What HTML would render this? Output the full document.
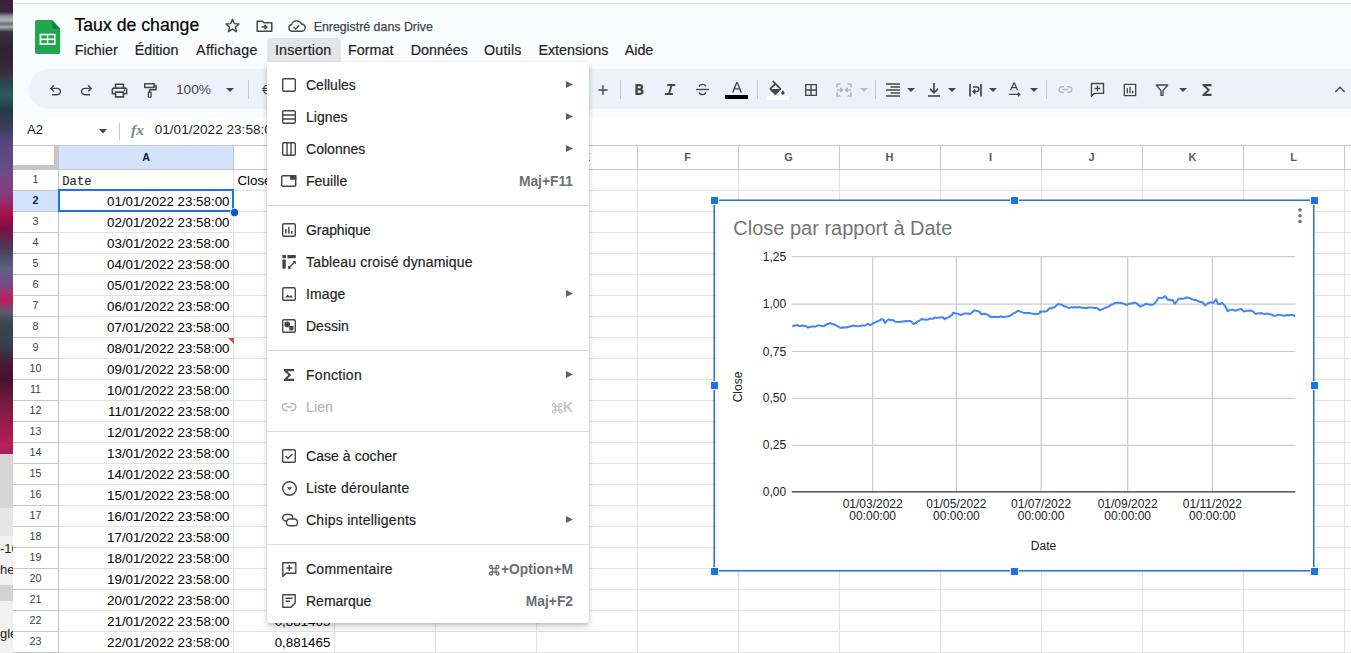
<!DOCTYPE html><html><head><meta charset="utf-8"><style>
html,body{margin:0;padding:0;}
body{width:1351px;height:653px;overflow:hidden;position:relative;background:#fff;font-family:"Liberation Sans",sans-serif;}
.t{position:absolute;white-space:nowrap;}
.r{position:absolute;}
svg{position:absolute;overflow:visible;}
</style></head><body>
<div class="r" style="left:0;top:0;width:13px;height:454px;background:linear-gradient(to bottom,#3a2038 0px,#3c2440 12px,#8a9298 16px,#b0b8b8 20px,#6a6e78 24px,#a8b0b0 27px,#3a3040 32px,#2c2234 50px,#3a2236 62px,#3c2a3c 72px,#2a4a50 84px,#2c5a5a 96px,#223c44 110px,#3a3a50 124px,#54487a 142px,#6a4c8a 172px,#8a3a7c 195px,#a8124a 213px,#7a1040 228px,#4a3a5a 248px,#5a6282 268px,#7a4a86 285px,#c01a5a 300px,#5a5a70 312px,#3a4650 322px,#34404c 345px,#4a1a34 362px,#4a1030 380px,#7a1a40 405px,#9a1a48 425px,#b8205a 445px,#a02060 454px);"></div>
<div class="r" style="left:0px;top:454px;width:13px;height:54px;background:#d6d6d6;"></div>
<div class="r" style="left:0px;top:508px;width:13px;height:28px;background:#e6e6e6;"></div>
<div class="r" style="left:0px;top:536px;width:13px;height:50px;background:#f2f2f2;"></div>
<div class="r" style="left:0px;top:585px;width:13px;height:16px;background:#d2d2d2;"></div>
<div class="r" style="left:0px;top:601px;width:13px;height:52px;background:#f0f0f0;"></div>
<div class="t" style="top:538.50px;font-size:13px;line-height:20px;color:#222;font-weight:normal;font-family:'Liberation Sans', sans-serif;left:0px;">-16</div>
<div class="t" style="top:559.50px;font-size:13px;line-height:20px;color:#222;font-weight:normal;font-family:'Liberation Sans', sans-serif;left:0px;">he</div>
<div class="t" style="top:623.50px;font-size:13px;line-height:20px;color:#222;font-weight:normal;font-family:'Liberation Sans', sans-serif;left:0px;">gle</div>
<div class="r" style="left:13px;top:0px;width:1338px;height:3px;background:#ffffff;"></div>
<div class="r" style="left:13px;top:3px;width:1338px;height:1px;background:#dcdcdc;"></div>
<div class="r" style="left:13px;top:4px;width:1338px;height:113px;background:#f9fbfd;"></div>
<div class="r" style="left:13px;top:0px;width:1px;height:653px;background:#ffffff;"></div>
<svg style="left:34.5px;top:19.8px;" width="25.2" height="34" viewBox="0 0 25.2 34"><path d="M2 0H17L25.2 8.7V32a2 2 0 0 1-2 2H2a2 2 0 0 1-2-2V2a2 2 0 0 1 2-2z" fill="#1ea84e"/><path d="M17 0L25.2 8.7H19a2 2 0 0 1-2-2z" fill="#188038"/><rect x="4.6" y="13.7" width="16" height="11.3" fill="#fff"/><rect x="6.3" y="15.3" width="5.6" height="3.2" fill="#1ea84e"/><rect x="13.3" y="15.3" width="5.6" height="3.2" fill="#1ea84e"/><rect x="6.3" y="20.1" width="5.6" height="3.2" fill="#1ea84e"/><rect x="13.3" y="20.1" width="5.6" height="3.2" fill="#1ea84e"/></svg>
<div class="t" style="top:14.57px;font-size:17.7px;line-height:20px;color:#000000;font-weight:normal;font-family:'Liberation Sans', sans-serif;left:74.4px;-webkit-text-stroke:0.2px #000;">Taux de change</div>
<svg style="left:224.5px;top:18.3px;" width="15" height="14.5" viewBox="0 0 15 14.5"><path d="M7.5 1.2L9.3 5.6L14 6L10.4 9.1L11.5 13.7L7.5 11.2L3.5 13.7L4.6 9.1L1 6L5.7 5.6Z" fill="none" stroke="#444746" stroke-width="1.4" stroke-linejoin="round"/></svg>
<svg style="left:255.5px;top:19.8px;" width="17" height="12.5" viewBox="0 0 17 12.5"><path d="M1.2 1.2H6.5L8 2.8H15.8V11.3H1.2Z" fill="none" stroke="#444746" stroke-width="1.5" stroke-linejoin="round"/><path d="M5.5 7H10.5M8.5 4.8L10.8 7L8.5 9.2" fill="none" stroke="#444746" stroke-width="1.5"/></svg>
<svg style="left:286.5px;top:20.3px;" width="19" height="12" viewBox="0 0 19 12"><path d="M5 11.2H14.5A3.6 3.6 0 0 0 14.6 4A5.4 5.4 0 0 0 4.6 4.5A3.4 3.4 0 0 0 5 11.2Z" fill="none" stroke="#444746" stroke-width="1.4"/><path d="M6.8 7.2L8.6 9L12.2 5.4" fill="none" stroke="#444746" stroke-width="1.4"/></svg>
<div class="t" style="top:16.50px;font-size:12.4px;line-height:20px;color:#444746;font-weight:normal;font-family:'Liberation Sans', sans-serif;left:313.7px;-webkit-text-stroke:0.25px #444746;">Enregistré dans Drive</div>
<div class="r" style="left:267px;top:38px;width:74px;height:24px;background:#e3e5e8;border-radius:4px 4px 0 0;"></div>
<div class="t" style="top:39.75px;font-size:14.3px;line-height:20px;color:#1f1f1f;font-weight:normal;font-family:'Liberation Sans', sans-serif;letter-spacing:0.02px;left:74.7px;-webkit-text-stroke:0.2px #1f1f1f;">Fichier</div>
<div class="t" style="top:39.75px;font-size:14.3px;line-height:20px;color:#1f1f1f;font-weight:normal;font-family:'Liberation Sans', sans-serif;letter-spacing:0px;left:134.7px;-webkit-text-stroke:0.2px #1f1f1f;">Édition</div>
<div class="t" style="top:39.75px;font-size:14.3px;line-height:20px;color:#1f1f1f;font-weight:normal;font-family:'Liberation Sans', sans-serif;letter-spacing:0.25px;left:196.1px;-webkit-text-stroke:0.2px #1f1f1f;">Affichage</div>
<div class="t" style="top:39.75px;font-size:14.3px;line-height:20px;color:#1f1f1f;font-weight:normal;font-family:'Liberation Sans', sans-serif;letter-spacing:0.2px;left:274.9px;-webkit-text-stroke:0.2px #1f1f1f;">Insertion</div>
<div class="t" style="top:39.75px;font-size:14.3px;line-height:20px;color:#1f1f1f;font-weight:normal;font-family:'Liberation Sans', sans-serif;letter-spacing:0px;left:348.09999999999997px;-webkit-text-stroke:0.2px #1f1f1f;">Format</div>
<div class="t" style="top:39.75px;font-size:14.3px;line-height:20px;color:#1f1f1f;font-weight:normal;font-family:'Liberation Sans', sans-serif;letter-spacing:0px;left:410.7px;-webkit-text-stroke:0.2px #1f1f1f;">Données</div>
<div class="t" style="top:39.75px;font-size:14.3px;line-height:20px;color:#1f1f1f;font-weight:normal;font-family:'Liberation Sans', sans-serif;letter-spacing:0.18px;left:484.0px;-webkit-text-stroke:0.2px #1f1f1f;">Outils</div>
<div class="t" style="top:39.75px;font-size:14.3px;line-height:20px;color:#1f1f1f;font-weight:normal;font-family:'Liberation Sans', sans-serif;letter-spacing:0px;left:538.4000000000001px;-webkit-text-stroke:0.2px #1f1f1f;">Extensions</div>
<div class="t" style="top:39.75px;font-size:14.3px;line-height:20px;color:#1f1f1f;font-weight:normal;font-family:'Liberation Sans', sans-serif;letter-spacing:0px;left:624.7px;-webkit-text-stroke:0.2px #1f1f1f;">Aide</div>
<div class="r" style="left:29px;top:69px;width:1340px;height:40px;background:#edf2fa;border-radius:20px;"></div>
<svg style="left:46.7px;top:81.5px;" width="17" height="17" viewBox="0 -960 960 960"><path d="M280-200v-80h284q63 0 109.5-40T720-420q0-60-46.5-100T564-560H312l104 104-56 56-200-200 200-200 56 56-104 104h252q97 0 166.5 63T800-420q0 94-69.5 157T564-200H280Z" fill="#444746"/></svg>
<svg style="left:78.3px;top:81.5px;" width="17" height="17" viewBox="0 -960 960 960"><path d="M396-200q-97 0-166.5-63T160-420q0-94 69.5-157T396-640h252L544-744l56-56 200 200-200 200-56-56 104-104H396q-63 0-109.5 40T240-420q0 60 46.5 100T396-280h284v80H396Z" fill="#444746"/></svg>
<svg style="left:109.5px;top:80.5px;" width="19" height="19" viewBox="0 -960 960 960"><path d="M640-640v-120H320v120h-80v-200h480v200h-80Zm-480 80h640-640Zm560 100q17 0 28.5-11.5T760-500q0-17-11.5-28.5T720-540q-17 0-28.5 11.5T680-500q0 17 11.5 28.5T720-460Zm-80 260v-160H320v160h320Zm80 80H240v-160H80v-240q0-51 35-85.5t85-34.5h560q51 0 85.5 34.5T880-520v240H720v160Zm80-240v-160q0-17-11.5-28.5T760-560H200q-17 0-28.5 11.5T160-520v160h80v-80h480v80h80Z" fill="#444746"/></svg>
<svg style="left:141.3px;top:81.0px;" width="18" height="18" viewBox="0 0 24 24"><path d="M5 3.5H17.5V8.5H5Z M17.5 6H20V11.5H11.5V15" fill="none" stroke="#444746" stroke-width="2" stroke-linejoin="round"/><rect x="9.8" y="15" width="3.6" height="6.5" rx="0.8" fill="none" stroke="#444746" stroke-width="1.8"/></svg>
<div class="t" style="top:80.15px;font-size:13.7px;line-height:20px;color:#444746;font-weight:normal;font-family:'Liberation Sans', sans-serif;left:176px;">100%</div>
<svg style="left:225.8px;top:87.8px;" width="8" height="4" viewBox="0 0 8 4"><path d="M0 0H8L4 4Z" fill="#444746"/></svg>
<div class="r" style="left:247.5px;top:79.5px;width:1px;height:19.5px;background:#c7c7c7;"></div>
<div class="t" style="top:80.15px;font-size:13.7px;line-height:20px;color:#444746;font-weight:normal;font-family:'Liberation Sans', sans-serif;left:262px;">€</div>
<svg style="left:594.7px;top:81.5px;" width="16" height="16" viewBox="0 0 24 24"><path d="M12 5V19M5 12H19" stroke="#444746" stroke-width="2.2"/></svg>
<div class="r" style="left:619.5px;top:79.5px;width:1px;height:19.5px;background:#c7c7c7;"></div>
<svg style="left:629.5px;top:80.3px;" width="19" height="19" viewBox="0 -960 960 960"><path d="M272-200v-560h221q65 0 120 40t55 111q0 51-23 78.5T602-491q25 11 55.5 41t30.5 90q0 89-65 124.5T501-200H272Zm121-112h104q48 0 58.5-24.5T566-372q0-11-10.5-35.5T494-432H393v120Zm0-228h93q33 0 48-17t15-38q0-24-17-39t-44-15h-95v109Z" fill="#444746"/></svg>
<svg style="left:660.8px;top:80.3px;" width="19" height="19" viewBox="0 -960 960 960"><path d="M200-200v-100h160l120-360H320v-100h400v100H580L460-300h140v100H200Z" fill="#444746"/></svg>
<svg style="left:694.3px;top:81.0px;" width="17" height="17" viewBox="0 0 24 24"><path d="M3 12H21" stroke="#444746" stroke-width="2"/><path d="M16.5 7.5C16 5.8 14.3 4.8 12 4.8C9.2 4.8 7.5 6.2 7.5 8" fill="none" stroke="#444746" stroke-width="2"/><path d="M7.5 16.2C8 18 9.8 19.2 12 19.2C14.8 19.2 16.5 17.8 16.5 16" fill="none" stroke="#444746" stroke-width="2"/></svg>
<svg style="left:731.5px;top:81.8px;" width="10" height="10.5" viewBox="0 0 10 10.5"><path d="M0 10.5L4.2 0H5.8L10 10.5H8.4L7.3 7.6H2.7L1.6 10.5Z M3.2 6.2H6.8L5 1.6Z" fill="#444746" fill-rule="evenodd"/></svg>
<div class="r" style="left:725px;top:95px;width:23.3px;height:3.9px;background:#000000;"></div>
<div class="r" style="left:756.6px;top:79.5px;width:1px;height:19.5px;background:#c7c7c7;"></div>
<svg style="left:767.8px;top:79.3px;" width="18" height="18" viewBox="0 -960 960 960"><path d="M346-140 100-386q-10-10-15-22t-5-25q0-13 5-25t15-22l230-229-106-106 62-65 400 400q10 10 14.5 22t4.5 25q0 13-4.5 25T686-386L440-140q-10 10-22 15t-25 5q-13 0-25-5t-22-15Zm47-506L179-432h428L393-646Zm399 526q-36 0-61-25.5T706-208q0-27 13.5-51t30.5-47l42-54 44 54q16 23 30 47t14 51q0 37-26 62.5T792-120Z" fill="#444746"/></svg>
<div class="r" style="left:765.5px;top:96px;width:23px;height:3.5px;background:#ffffff;"></div>
<svg style="left:803.0px;top:81.5px;" width="16" height="16" viewBox="0 0 24 24"><path d="M4 4H20V20H4Z M12 4V20 M4 12H20" fill="none" stroke="#444746" stroke-width="2"/></svg>
<svg style="left:836px;top:83px;" width="16" height="14" viewBox="0 0 16 14"><path d="M1 4.5V1H4.5M1 9.5V13H4.5M15 4.5V1H11.5M15 9.5V13H11.5" fill="none" stroke="#b4b6b8" stroke-width="1.6"/><path d="M1 7H6.5M4.3 4.8L6.6 7L4.3 9.2M15 7H9.5M11.7 4.8L9.4 7L11.7 9.2" fill="none" stroke="#b4b6b8" stroke-width="1.6"/></svg>
<svg style="left:860.4px;top:87.8px;" width="8" height="4" viewBox="0 0 8 4"><path d="M0 0H8L4 4Z" fill="#b9bbbd"/></svg>
<div class="r" style="left:875.3px;top:79.5px;width:1px;height:19.5px;background:#c7c7c7;"></div>
<svg style="left:886px;top:83px;" width="14" height="14" viewBox="0 0 14 14"><path d="M0 1H14M4.5 4H14M0 7H14M4.5 10H14M0 13H14" stroke="#444746" stroke-width="1.5"/></svg>
<svg style="left:907px;top:87.8px;" width="8" height="4" viewBox="0 0 8 4"><path d="M0 0H8L4 4Z" fill="#444746"/></svg>
<svg style="left:928px;top:83px;" width="12" height="14" viewBox="0 0 12 14"><path d="M6 0V9.5M2 5.8L6 9.8L10 5.8" fill="none" stroke="#444746" stroke-width="1.7"/><path d="M0 13H12" stroke="#444746" stroke-width="1.6"/></svg>
<svg style="left:947.5px;top:87.8px;" width="8" height="4" viewBox="0 0 8 4"><path d="M0 0H8L4 4Z" fill="#444746"/></svg>
<svg style="left:968.5px;top:84px;" width="13" height="12.5" viewBox="0 0 13 12.5"><path d="M1 0V12.5M12 0V12.5" stroke="#444746" stroke-width="1.7"/><path d="M4 3H7.5A2.3 2.3 0 0 1 7.5 7.6H4.5M6.3 5.6L4.2 7.6L6.3 9.6" fill="none" stroke="#444746" stroke-width="1.5"/></svg>
<svg style="left:989px;top:87.8px;" width="8" height="4" viewBox="0 0 8 4"><path d="M0 0H8L4 4Z" fill="#444746"/></svg>
<svg style="left:1007.4px;top:81.0px;" width="17" height="17" viewBox="0 0 24 24"><path d="M5 13L9.5 3H10.5L15 13M6.8 9.5H13.2M3 19H18M15.5 16.5L18 19L15.5 21.5" fill="none" stroke="#444746" stroke-width="1.8"/></svg>
<svg style="left:1030.4px;top:87.8px;" width="8" height="4" viewBox="0 0 8 4"><path d="M0 0H8L4 4Z" fill="#444746"/></svg>
<div class="r" style="left:1046.2px;top:79.5px;width:1px;height:19.5px;background:#c7c7c7;"></div>
<svg style="left:1057.1px;top:81.0px;" width="17" height="17" viewBox="0 0 24 24"><path d="M10 8H7A4 4 0 0 0 7 16H10M14 8H17A4 4 0 0 1 17 16H14M8 12H16" fill="none" stroke="#b9bbbd" stroke-width="2"/></svg>
<svg style="left:1089.0px;top:81.0px;" width="17" height="17" viewBox="0 0 24 24"><path d="M3.5 3.5H20.5V17.5H7.5L3.5 21.5Z" fill="none" stroke="#444746" stroke-width="2" stroke-linejoin="round"/><path d="M12 6.5V14.5M8 10.5H16" stroke="#444746" stroke-width="2"/></svg>
<svg style="left:1122.2px;top:81.5px;" width="16" height="16" viewBox="0 0 24 24"><path d="M3.5 3.5H20.5V20.5H3.5Z" fill="none" stroke="#444746" stroke-width="2"/><path d="M8 9.5V17M12 7V17M16 13V17" stroke="#444746" stroke-width="2"/></svg>
<svg style="left:1153.7px;top:81.5px;" width="16" height="16" viewBox="0 0 24 24"><path d="M3.5 4.5H20.5L13.5 13V20H10.5V13Z" fill="none" stroke="#444746" stroke-width="2" stroke-linejoin="round"/></svg>
<svg style="left:1178.9px;top:87.8px;" width="8" height="4" viewBox="0 0 8 4"><path d="M0 0H8L4 4Z" fill="#444746"/></svg>
<svg style="left:1197.6px;top:80.5px;" width="18" height="18" viewBox="0 -960 960 960"><path d="M240-160v-80l260-240-260-240v-80h480v120H431l215 200-215 200h289v120H240Z" fill="#444746"/></svg>
<svg style="left:1332.0px;top:81.5px;" width="16" height="16" viewBox="0 0 24 24"><path d="M5 15L12 8L19 15" fill="none" stroke="#444746" stroke-width="2.2"/></svg>
<div class="r" style="left:13px;top:117px;width:1338px;height:28px;background:#ffffff;"></div>
<div class="r" style="left:13px;top:145px;width:1338px;height:1px;background:#c4c7c5;"></div>
<div class="t" style="top:120.23px;font-size:13.2px;line-height:20px;color:#1f1f1f;font-weight:normal;font-family:'Liberation Sans', sans-serif;left:27px;">A2</div>
<svg style="left:99px;top:128.5px;" width="8" height="4.5" viewBox="0 0 8 4.5"><path d="M0 0H8L4 4.5Z" fill="#444746"/></svg>
<div class="r" style="left:119px;top:123px;width:1px;height:16.5px;background:#c7c7c7;"></div>
<div class="t" style="top:120.13px;font-size:15.5px;line-height:20px;color:#80868b;font-weight:bold;font-family:'Liberation Sans', sans-serif;left:131px;font-style:italic;font-family:'Liberation Serif',serif;">fx</div>
<div class="t" style="top:120.09px;font-size:13.6px;line-height:20px;color:#1f1f1f;font-weight:normal;font-family:'Liberation Sans', sans-serif;left:154.7px;">01/01/2022 23:58:00</div>
<div class="r" style="left:13px;top:146px;width:1338px;height:23px;background:#ffffff;"></div>
<div class="r" style="left:59px;top:146px;width:174px;height:23px;background:#d3e3fd;"></div>
<div class="r" style="left:13px;top:169px;width:1338px;height:1px;background:#c4c7c5;"></div>
<div class="r" style="left:13px;top:170px;width:45px;height:483px;background:#ffffff;"></div>
<div class="r" style="left:13px;top:191px;width:45px;height:20px;background:#d3e3fd;"></div>
<div class="r" style="left:58px;top:146px;width:1px;height:507px;background:#c4c7c5;"></div>
<div class="r" style="left:233px;top:146px;width:1px;height:23px;background:#c4c7c5;"></div>
<div class="r" style="left:233px;top:170px;width:1px;height:483px;background:#e1e1e1;"></div>
<div class="r" style="left:334px;top:146px;width:1px;height:23px;background:#c4c7c5;"></div>
<div class="r" style="left:334px;top:170px;width:1px;height:483px;background:#e1e1e1;"></div>
<div class="r" style="left:435px;top:146px;width:1px;height:23px;background:#c4c7c5;"></div>
<div class="r" style="left:435px;top:170px;width:1px;height:483px;background:#e1e1e1;"></div>
<div class="r" style="left:536px;top:146px;width:1px;height:23px;background:#c4c7c5;"></div>
<div class="r" style="left:536px;top:170px;width:1px;height:483px;background:#e1e1e1;"></div>
<div class="r" style="left:637px;top:146px;width:1px;height:23px;background:#c4c7c5;"></div>
<div class="r" style="left:637px;top:170px;width:1px;height:483px;background:#e1e1e1;"></div>
<div class="r" style="left:738px;top:146px;width:1px;height:23px;background:#c4c7c5;"></div>
<div class="r" style="left:738px;top:170px;width:1px;height:483px;background:#e1e1e1;"></div>
<div class="r" style="left:839px;top:146px;width:1px;height:23px;background:#c4c7c5;"></div>
<div class="r" style="left:839px;top:170px;width:1px;height:483px;background:#e1e1e1;"></div>
<div class="r" style="left:940px;top:146px;width:1px;height:23px;background:#c4c7c5;"></div>
<div class="r" style="left:940px;top:170px;width:1px;height:483px;background:#e1e1e1;"></div>
<div class="r" style="left:1041px;top:146px;width:1px;height:23px;background:#c4c7c5;"></div>
<div class="r" style="left:1041px;top:170px;width:1px;height:483px;background:#e1e1e1;"></div>
<div class="r" style="left:1142px;top:146px;width:1px;height:23px;background:#c4c7c5;"></div>
<div class="r" style="left:1142px;top:170px;width:1px;height:483px;background:#e1e1e1;"></div>
<div class="r" style="left:1243px;top:146px;width:1px;height:23px;background:#c4c7c5;"></div>
<div class="r" style="left:1243px;top:170px;width:1px;height:483px;background:#e1e1e1;"></div>
<div class="r" style="left:1344px;top:146px;width:1px;height:23px;background:#c4c7c5;"></div>
<div class="r" style="left:1344px;top:170px;width:1px;height:483px;background:#e1e1e1;"></div>
<div class="r" style="left:13px;top:190px;width:45px;height:1px;background:#c4c7c5;"></div>
<div class="r" style="left:59px;top:190px;width:1292px;height:1px;background:#e1e1e1;"></div>
<div class="r" style="left:13px;top:211px;width:45px;height:1px;background:#c4c7c5;"></div>
<div class="r" style="left:59px;top:211px;width:1292px;height:1px;background:#e1e1e1;"></div>
<div class="r" style="left:13px;top:232px;width:45px;height:1px;background:#c4c7c5;"></div>
<div class="r" style="left:59px;top:232px;width:1292px;height:1px;background:#e1e1e1;"></div>
<div class="r" style="left:13px;top:253px;width:45px;height:1px;background:#c4c7c5;"></div>
<div class="r" style="left:59px;top:253px;width:1292px;height:1px;background:#e1e1e1;"></div>
<div class="r" style="left:13px;top:274px;width:45px;height:1px;background:#c4c7c5;"></div>
<div class="r" style="left:59px;top:274px;width:1292px;height:1px;background:#e1e1e1;"></div>
<div class="r" style="left:13px;top:295px;width:45px;height:1px;background:#c4c7c5;"></div>
<div class="r" style="left:59px;top:295px;width:1292px;height:1px;background:#e1e1e1;"></div>
<div class="r" style="left:13px;top:316px;width:45px;height:1px;background:#c4c7c5;"></div>
<div class="r" style="left:59px;top:316px;width:1292px;height:1px;background:#e1e1e1;"></div>
<div class="r" style="left:13px;top:337px;width:45px;height:1px;background:#c4c7c5;"></div>
<div class="r" style="left:59px;top:337px;width:1292px;height:1px;background:#e1e1e1;"></div>
<div class="r" style="left:13px;top:358px;width:45px;height:1px;background:#c4c7c5;"></div>
<div class="r" style="left:59px;top:358px;width:1292px;height:1px;background:#e1e1e1;"></div>
<div class="r" style="left:13px;top:379px;width:45px;height:1px;background:#c4c7c5;"></div>
<div class="r" style="left:59px;top:379px;width:1292px;height:1px;background:#e1e1e1;"></div>
<div class="r" style="left:13px;top:400px;width:45px;height:1px;background:#c4c7c5;"></div>
<div class="r" style="left:59px;top:400px;width:1292px;height:1px;background:#e1e1e1;"></div>
<div class="r" style="left:13px;top:421px;width:45px;height:1px;background:#c4c7c5;"></div>
<div class="r" style="left:59px;top:421px;width:1292px;height:1px;background:#e1e1e1;"></div>
<div class="r" style="left:13px;top:442px;width:45px;height:1px;background:#c4c7c5;"></div>
<div class="r" style="left:59px;top:442px;width:1292px;height:1px;background:#e1e1e1;"></div>
<div class="r" style="left:13px;top:463px;width:45px;height:1px;background:#c4c7c5;"></div>
<div class="r" style="left:59px;top:463px;width:1292px;height:1px;background:#e1e1e1;"></div>
<div class="r" style="left:13px;top:484px;width:45px;height:1px;background:#c4c7c5;"></div>
<div class="r" style="left:59px;top:484px;width:1292px;height:1px;background:#e1e1e1;"></div>
<div class="r" style="left:13px;top:505px;width:45px;height:1px;background:#c4c7c5;"></div>
<div class="r" style="left:59px;top:505px;width:1292px;height:1px;background:#e1e1e1;"></div>
<div class="r" style="left:13px;top:526px;width:45px;height:1px;background:#c4c7c5;"></div>
<div class="r" style="left:59px;top:526px;width:1292px;height:1px;background:#e1e1e1;"></div>
<div class="r" style="left:13px;top:547px;width:45px;height:1px;background:#c4c7c5;"></div>
<div class="r" style="left:59px;top:547px;width:1292px;height:1px;background:#e1e1e1;"></div>
<div class="r" style="left:13px;top:568px;width:45px;height:1px;background:#c4c7c5;"></div>
<div class="r" style="left:59px;top:568px;width:1292px;height:1px;background:#e1e1e1;"></div>
<div class="r" style="left:13px;top:589px;width:45px;height:1px;background:#c4c7c5;"></div>
<div class="r" style="left:59px;top:589px;width:1292px;height:1px;background:#e1e1e1;"></div>
<div class="r" style="left:13px;top:610px;width:45px;height:1px;background:#c4c7c5;"></div>
<div class="r" style="left:59px;top:610px;width:1292px;height:1px;background:#e1e1e1;"></div>
<div class="r" style="left:13px;top:631px;width:45px;height:1px;background:#c4c7c5;"></div>
<div class="r" style="left:59px;top:631px;width:1292px;height:1px;background:#e1e1e1;"></div>
<div class="r" style="left:13px;top:652px;width:45px;height:1px;background:#c4c7c5;"></div>
<div class="r" style="left:59px;top:652px;width:1292px;height:1px;background:#e1e1e1;"></div>
<div class="r" style="left:54px;top:146px;width:4px;height:23px;background:#c6c6c6;"></div>
<div class="r" style="left:13px;top:165px;width:45px;height:4px;background:#c6c6c6;"></div>
<div class="t" style="top:146.89px;font-size:10.7px;line-height:20px;color:#041e49;font-weight:bold;font-family:'Liberation Sans', sans-serif;left:-54px;width:400px;text-align:center;">A</div>
<div class="t" style="top:147.19px;font-size:11px;line-height:20px;color:#575a5c;font-weight:bold;font-family:'Liberation Sans', sans-serif;left:83.5px;width:400px;text-align:center;">B</div>
<div class="t" style="top:147.19px;font-size:11px;line-height:20px;color:#575a5c;font-weight:bold;font-family:'Liberation Sans', sans-serif;left:184.5px;width:400px;text-align:center;">C</div>
<div class="t" style="top:147.19px;font-size:11px;line-height:20px;color:#575a5c;font-weight:bold;font-family:'Liberation Sans', sans-serif;left:285.5px;width:400px;text-align:center;">D</div>
<div class="t" style="top:147.19px;font-size:11px;line-height:20px;color:#575a5c;font-weight:bold;font-family:'Liberation Sans', sans-serif;left:386.5px;width:400px;text-align:center;">E</div>
<div class="t" style="top:147.19px;font-size:11px;line-height:20px;color:#575a5c;font-weight:bold;font-family:'Liberation Sans', sans-serif;left:487.5px;width:400px;text-align:center;">F</div>
<div class="t" style="top:147.19px;font-size:11px;line-height:20px;color:#575a5c;font-weight:bold;font-family:'Liberation Sans', sans-serif;left:588.5px;width:400px;text-align:center;">G</div>
<div class="t" style="top:147.19px;font-size:11px;line-height:20px;color:#575a5c;font-weight:bold;font-family:'Liberation Sans', sans-serif;left:689.5px;width:400px;text-align:center;">H</div>
<div class="t" style="top:147.19px;font-size:11px;line-height:20px;color:#575a5c;font-weight:bold;font-family:'Liberation Sans', sans-serif;left:790.5px;width:400px;text-align:center;">I</div>
<div class="t" style="top:147.19px;font-size:11px;line-height:20px;color:#575a5c;font-weight:bold;font-family:'Liberation Sans', sans-serif;left:891.5px;width:400px;text-align:center;">J</div>
<div class="t" style="top:147.19px;font-size:11px;line-height:20px;color:#575a5c;font-weight:bold;font-family:'Liberation Sans', sans-serif;left:992.5px;width:400px;text-align:center;">K</div>
<div class="t" style="top:147.19px;font-size:11px;line-height:20px;color:#575a5c;font-weight:bold;font-family:'Liberation Sans', sans-serif;left:1093.5px;width:400px;text-align:center;">L</div>
<div class="t" style="top:169.19px;font-size:10.7px;line-height:20px;color:#3c4043;font-weight:normal;font-family:'Liberation Sans', sans-serif;left:-164.5px;width:400px;text-align:center;">1</div>
<div class="t" style="top:190.19px;font-size:10.7px;line-height:20px;color:#041e49;font-weight:bold;font-family:'Liberation Sans', sans-serif;left:-164.5px;width:400px;text-align:center;">2</div>
<div class="t" style="top:211.19px;font-size:10.7px;line-height:20px;color:#3c4043;font-weight:normal;font-family:'Liberation Sans', sans-serif;left:-164.5px;width:400px;text-align:center;">3</div>
<div class="t" style="top:232.19px;font-size:10.7px;line-height:20px;color:#3c4043;font-weight:normal;font-family:'Liberation Sans', sans-serif;left:-164.5px;width:400px;text-align:center;">4</div>
<div class="t" style="top:253.19px;font-size:10.7px;line-height:20px;color:#3c4043;font-weight:normal;font-family:'Liberation Sans', sans-serif;left:-164.5px;width:400px;text-align:center;">5</div>
<div class="t" style="top:274.19px;font-size:10.7px;line-height:20px;color:#3c4043;font-weight:normal;font-family:'Liberation Sans', sans-serif;left:-164.5px;width:400px;text-align:center;">6</div>
<div class="t" style="top:295.19px;font-size:10.7px;line-height:20px;color:#3c4043;font-weight:normal;font-family:'Liberation Sans', sans-serif;left:-164.5px;width:400px;text-align:center;">7</div>
<div class="t" style="top:316.19px;font-size:10.7px;line-height:20px;color:#3c4043;font-weight:normal;font-family:'Liberation Sans', sans-serif;left:-164.5px;width:400px;text-align:center;">8</div>
<div class="t" style="top:337.19px;font-size:10.7px;line-height:20px;color:#3c4043;font-weight:normal;font-family:'Liberation Sans', sans-serif;left:-164.5px;width:400px;text-align:center;">9</div>
<div class="t" style="top:358.19px;font-size:10.7px;line-height:20px;color:#3c4043;font-weight:normal;font-family:'Liberation Sans', sans-serif;left:-164.5px;width:400px;text-align:center;">10</div>
<div class="t" style="top:379.19px;font-size:10.7px;line-height:20px;color:#3c4043;font-weight:normal;font-family:'Liberation Sans', sans-serif;left:-164.5px;width:400px;text-align:center;">11</div>
<div class="t" style="top:400.19px;font-size:10.7px;line-height:20px;color:#3c4043;font-weight:normal;font-family:'Liberation Sans', sans-serif;left:-164.5px;width:400px;text-align:center;">12</div>
<div class="t" style="top:421.19px;font-size:10.7px;line-height:20px;color:#3c4043;font-weight:normal;font-family:'Liberation Sans', sans-serif;left:-164.5px;width:400px;text-align:center;">13</div>
<div class="t" style="top:442.19px;font-size:10.7px;line-height:20px;color:#3c4043;font-weight:normal;font-family:'Liberation Sans', sans-serif;left:-164.5px;width:400px;text-align:center;">14</div>
<div class="t" style="top:463.19px;font-size:10.7px;line-height:20px;color:#3c4043;font-weight:normal;font-family:'Liberation Sans', sans-serif;left:-164.5px;width:400px;text-align:center;">15</div>
<div class="t" style="top:484.19px;font-size:10.7px;line-height:20px;color:#3c4043;font-weight:normal;font-family:'Liberation Sans', sans-serif;left:-164.5px;width:400px;text-align:center;">16</div>
<div class="t" style="top:505.19px;font-size:10.7px;line-height:20px;color:#3c4043;font-weight:normal;font-family:'Liberation Sans', sans-serif;left:-164.5px;width:400px;text-align:center;">17</div>
<div class="t" style="top:526.19px;font-size:10.7px;line-height:20px;color:#3c4043;font-weight:normal;font-family:'Liberation Sans', sans-serif;left:-164.5px;width:400px;text-align:center;">18</div>
<div class="t" style="top:547.19px;font-size:10.7px;line-height:20px;color:#3c4043;font-weight:normal;font-family:'Liberation Sans', sans-serif;left:-164.5px;width:400px;text-align:center;">19</div>
<div class="t" style="top:568.19px;font-size:10.7px;line-height:20px;color:#3c4043;font-weight:normal;font-family:'Liberation Sans', sans-serif;left:-164.5px;width:400px;text-align:center;">20</div>
<div class="t" style="top:589.19px;font-size:10.7px;line-height:20px;color:#3c4043;font-weight:normal;font-family:'Liberation Sans', sans-serif;left:-164.5px;width:400px;text-align:center;">21</div>
<div class="t" style="top:610.19px;font-size:10.7px;line-height:20px;color:#3c4043;font-weight:normal;font-family:'Liberation Sans', sans-serif;left:-164.5px;width:400px;text-align:center;">22</div>
<div class="t" style="top:631.19px;font-size:10.7px;line-height:20px;color:#3c4043;font-weight:normal;font-family:'Liberation Sans', sans-serif;left:-164.5px;width:400px;text-align:center;">23</div>
<div class="t" style="top:171.75px;font-size:12.2px;line-height:20px;color:#1f1f1f;font-weight:normal;font-family:'Liberation Mono', monospace;left:62.3px;-webkit-text-stroke:0.1px #1f1f1f;">Date</div>
<div class="t" style="top:170.77px;font-size:13.35px;line-height:20px;color:#000;font-weight:normal;font-family:'Liberation Sans', sans-serif;left:237.4px;">Close</div>
<div class="t" style="top:192.07px;font-size:13.35px;line-height:20px;color:#000;font-weight:normal;font-family:'Liberation Sans', sans-serif;right:1121.5px;">01/01/2022 23:58:00</div>
<div class="t" style="top:213.07px;font-size:13.35px;line-height:20px;color:#000;font-weight:normal;font-family:'Liberation Sans', sans-serif;right:1121.5px;">02/01/2022 23:58:00</div>
<div class="t" style="top:234.07px;font-size:13.35px;line-height:20px;color:#000;font-weight:normal;font-family:'Liberation Sans', sans-serif;right:1121.5px;">03/01/2022 23:58:00</div>
<div class="t" style="top:255.07px;font-size:13.35px;line-height:20px;color:#000;font-weight:normal;font-family:'Liberation Sans', sans-serif;right:1121.5px;">04/01/2022 23:58:00</div>
<div class="t" style="top:276.07px;font-size:13.35px;line-height:20px;color:#000;font-weight:normal;font-family:'Liberation Sans', sans-serif;right:1121.5px;">05/01/2022 23:58:00</div>
<div class="t" style="top:297.07px;font-size:13.35px;line-height:20px;color:#000;font-weight:normal;font-family:'Liberation Sans', sans-serif;right:1121.5px;">06/01/2022 23:58:00</div>
<div class="t" style="top:318.07px;font-size:13.35px;line-height:20px;color:#000;font-weight:normal;font-family:'Liberation Sans', sans-serif;right:1121.5px;">07/01/2022 23:58:00</div>
<div class="t" style="top:339.07px;font-size:13.35px;line-height:20px;color:#000;font-weight:normal;font-family:'Liberation Sans', sans-serif;right:1121.5px;">08/01/2022 23:58:00</div>
<div class="t" style="top:360.07px;font-size:13.35px;line-height:20px;color:#000;font-weight:normal;font-family:'Liberation Sans', sans-serif;right:1121.5px;">09/01/2022 23:58:00</div>
<div class="t" style="top:381.07px;font-size:13.35px;line-height:20px;color:#000;font-weight:normal;font-family:'Liberation Sans', sans-serif;right:1121.5px;">10/01/2022 23:58:00</div>
<div class="t" style="top:402.07px;font-size:13.35px;line-height:20px;color:#000;font-weight:normal;font-family:'Liberation Sans', sans-serif;right:1121.5px;">11/01/2022 23:58:00</div>
<div class="t" style="top:423.07px;font-size:13.35px;line-height:20px;color:#000;font-weight:normal;font-family:'Liberation Sans', sans-serif;right:1121.5px;">12/01/2022 23:58:00</div>
<div class="t" style="top:444.07px;font-size:13.35px;line-height:20px;color:#000;font-weight:normal;font-family:'Liberation Sans', sans-serif;right:1121.5px;">13/01/2022 23:58:00</div>
<div class="t" style="top:465.07px;font-size:13.35px;line-height:20px;color:#000;font-weight:normal;font-family:'Liberation Sans', sans-serif;right:1121.5px;">14/01/2022 23:58:00</div>
<div class="t" style="top:486.07px;font-size:13.35px;line-height:20px;color:#000;font-weight:normal;font-family:'Liberation Sans', sans-serif;right:1121.5px;">15/01/2022 23:58:00</div>
<div class="t" style="top:507.07px;font-size:13.35px;line-height:20px;color:#000;font-weight:normal;font-family:'Liberation Sans', sans-serif;right:1121.5px;">16/01/2022 23:58:00</div>
<div class="t" style="top:528.07px;font-size:13.35px;line-height:20px;color:#000;font-weight:normal;font-family:'Liberation Sans', sans-serif;right:1121.5px;">17/01/2022 23:58:00</div>
<div class="t" style="top:549.07px;font-size:13.35px;line-height:20px;color:#000;font-weight:normal;font-family:'Liberation Sans', sans-serif;right:1121.5px;">18/01/2022 23:58:00</div>
<div class="t" style="top:570.07px;font-size:13.35px;line-height:20px;color:#000;font-weight:normal;font-family:'Liberation Sans', sans-serif;right:1121.5px;">19/01/2022 23:58:00</div>
<div class="t" style="top:591.07px;font-size:13.35px;line-height:20px;color:#000;font-weight:normal;font-family:'Liberation Sans', sans-serif;right:1121.5px;">20/01/2022 23:58:00</div>
<div class="t" style="top:612.07px;font-size:13.35px;line-height:20px;color:#000;font-weight:normal;font-family:'Liberation Sans', sans-serif;right:1121.5px;">21/01/2022 23:58:00</div>
<div class="t" style="top:633.07px;font-size:13.35px;line-height:20px;color:#000;font-weight:normal;font-family:'Liberation Sans', sans-serif;right:1121.5px;">22/01/2022 23:58:00</div>
<div class="t" style="top:612.07px;font-size:13.35px;line-height:20px;color:#000;font-weight:normal;font-family:'Liberation Sans', sans-serif;right:1020.7px;">0,881465</div>
<div class="t" style="top:633.07px;font-size:13.35px;line-height:20px;color:#000;font-weight:normal;font-family:'Liberation Sans', sans-serif;right:1020.7px;">0,881465</div>
<svg style="left:227.5px;top:338px;" width="6" height="6" viewBox="0 0 6 6"><path d="M0 0H6V6Z" fill="#ea4335"/></svg>
<div class="r" style="left:58px;top:189px;width:176px;height:23px;background:transparent;box-sizing:border-box;border:2px solid #1a73e8;"></div>
<svg style="left:229.5px;top:207.5px;" width="9" height="9" viewBox="0 0 9 9"><circle cx="4.5" cy="4.5" r="4.2" fill="#0b57d0" stroke="#fff" stroke-width="0.8"/></svg>
<div class="r" style="left:714px;top:200px;width:600px;height:371px;background:#ffffff;"></div>
<div class="t" style="top:218.17px;font-size:20px;line-height:20px;color:#757575;font-weight:normal;font-family:'Liberation Sans', sans-serif;left:733.3px;">Close par rapport à Date</div>
<svg style="left:0;top:0" width="1351" height="653" viewBox="0 0 1351 653"><path d="M791.7 256.6H1295.4" stroke="#cccccc" stroke-width="1.2"/><path d="M791.7 304.2H1295.4" stroke="#cccccc" stroke-width="1.2"/><path d="M791.7 351.5H1295.4" stroke="#cccccc" stroke-width="1.2"/><path d="M791.7 398.3H1295.4" stroke="#cccccc" stroke-width="1.2"/><path d="M791.7 445.3H1295.4" stroke="#cccccc" stroke-width="1.2"/><path d="M872.7 256.6V491.9" stroke="#cccccc" stroke-width="1.2"/><path d="M956.4 256.6V491.9" stroke="#cccccc" stroke-width="1.2"/><path d="M1041.1 256.6V491.9" stroke="#cccccc" stroke-width="1.2"/><path d="M1127.7 256.6V491.9" stroke="#cccccc" stroke-width="1.2"/><path d="M1212.4 256.6V491.9" stroke="#cccccc" stroke-width="1.2"/><path d="M791.7 491.9H1295.4" stroke="#333333" stroke-width="1.2"/><path d="M792.3 326.6 L793.9 325.6 L795.6 325.4 L797.2 325.1 L798.8 325.9 L800.4 326.0 L802.3 325.5 L804.2 325.8 L806.2 326.3 L808.1 327.7 L810.0 326.9 L811.9 326.5 L813.9 326.5 L815.8 326.5 L817.7 325.4 L819.4 325.5 L821.1 325.9 L822.8 326.3 L824.5 325.9 L826.4 324.4 L828.3 323.8 L830.2 323.0 L832.2 324.1 L834.1 324.5 L836.0 325.4 L837.9 326.3 L839.8 327.5 L841.5 328.0 L843.2 327.2 L844.9 327.5 L846.6 327.5 L848.5 326.8 L850.4 326.6 L852.4 325.7 L854.3 325.7 L856.2 325.9 L858.1 326.4 L860.1 325.9 L862.0 325.5 L863.9 325.6 L865.8 325.2 L867.8 324.0 L870.6 325.0 L872.2 324.1 L873.9 322.8 L875.5 322.4 L877.4 321.3 L879.3 320.6 L881.2 319.3 L883.2 319.6 L885.1 322.9 L887.0 320.5 L888.9 319.4 L890.9 320.2 L892.8 320.0 L894.7 321.4 L896.6 321.8 L898.5 322.0 L900.5 321.7 L902.1 321.4 L903.7 321.6 L905.3 320.9 L906.9 321.2 L908.5 321.0 L910.1 320.9 L912.0 322.2 L913.9 324.1 L915.9 323.0 L917.8 321.3 L919.7 320.6 L921.6 319.0 L923.2 319.6 L924.9 319.4 L926.5 319.7 L928.1 319.4 L929.7 318.7 L931.3 318.8 L933.2 318.7 L935.1 317.6 L937.0 318.0 L939.0 317.5 L940.9 317.4 L942.8 317.2 L944.7 319.2 L946.7 317.9 L948.6 317.4 L950.2 316.1 L951.8 315.1 L953.4 312.6 L955.0 313.2 L956.6 313.4 L958.2 313.9 L961.1 315.0 L963.0 314.1 L964.7 313.4 L966.4 313.6 L968.1 313.5 L969.8 314.1 L971.4 313.2 L973.0 311.4 L974.6 310.4 L976.2 310.8 L977.8 311.1 L979.4 311.7 L981.3 314.4 L982.9 314.0 L984.5 313.7 L986.1 314.2 L987.7 314.9 L989.3 315.9 L990.9 317.1 L992.9 316.9 L994.8 316.8 L996.7 317.0 L998.6 317.1 L1000.6 316.3 L1002.5 317.0 L1004.4 316.7 L1006.3 316.6 L1008.2 316.3 L1010.2 315.7 L1011.8 314.7 L1013.4 313.3 L1015.0 312.9 L1017.9 310.7 L1019.8 311.3 L1021.7 312.1 L1023.6 312.7 L1025.6 313.1 L1027.5 313.0 L1029.4 313.1 L1031.3 313.5 L1033.3 313.7 L1035.2 314.2 L1037.1 314.1 L1039.0 313.6 L1041.0 311.9 L1040.0 311.4 L1041.7 311.5 L1043.4 311.6 L1045.1 311.6 L1046.7 311.3 L1049.6 308.3 L1051.2 308.3 L1052.8 307.5 L1054.4 307.3 L1056.4 305.4 L1058.3 304.0 L1060.2 304.6 L1062.1 304.8 L1063.7 306.2 L1065.3 306.3 L1066.9 307.0 L1068.5 308.0 L1070.2 307.6 L1071.8 307.1 L1073.4 307.6 L1075.0 307.0 L1076.6 307.6 L1078.5 307.1 L1080.4 307.4 L1082.3 307.7 L1084.3 307.7 L1086.2 308.3 L1088.1 307.5 L1090.0 307.6 L1092.0 307.6 L1093.9 308.0 L1095.8 307.7 L1097.7 308.6 L1099.7 310.2 L1101.6 309.5 L1103.5 308.6 L1105.4 307.7 L1107.4 307.0 L1109.3 306.2 L1111.2 304.7 L1113.1 304.1 L1115.1 302.9 L1117.0 302.7 L1118.9 302.8 L1120.8 303.1 L1122.8 303.2 L1124.7 304.2 L1126.6 304.9 L1128.5 303.8 L1130.5 303.8 L1132.4 303.2 L1135.3 302.6 L1136.9 303.6 L1138.5 305.0 L1140.1 306.6 L1143.0 305.6 L1145.9 303.7 L1147.8 304.3 L1149.7 304.7 L1151.6 304.7 L1153.5 304.4 L1155.2 302.6 L1156.8 300.7 L1158.4 297.8 L1160.0 298.1 L1161.6 298.1 L1163.2 297.6 L1165.1 296.1 L1168.0 299.8 L1169.6 299.6 L1171.2 300.4 L1172.8 300.0 L1174.7 303.8 L1176.6 301.7 L1178.6 298.7 L1180.5 298.5 L1182.4 298.9 L1184.3 298.4 L1186.3 297.5 L1188.2 297.8 L1190.1 298.2 L1192.0 299.3 L1194.0 299.9 L1195.9 299.8 L1197.8 301.0 L1199.7 301.7 L1202.6 302.3 L1205.1 305.4 L1207.4 303.5 L1209.4 302.8 L1211.3 302.3 L1213.2 303.0 L1216.1 299.4 L1218.0 304.1 L1219.9 304.1 L1221.9 303.0 L1224.8 305.4 L1227.6 311.2 L1229.2 310.2 L1230.9 309.9 L1232.5 309.6 L1234.4 310.5 L1236.1 310.5 L1237.7 309.8 L1239.4 309.5 L1241.1 308.8 L1244.0 311.6 L1245.9 310.8 L1247.9 310.7 L1249.8 310.5 L1251.7 310.7 L1253.6 311.9 L1255.6 314.1 L1257.5 313.5 L1259.4 313.3 L1261.3 313.1 L1263.2 313.7 L1264.9 314.1 L1266.6 313.8 L1268.3 313.6 L1270.0 314.4 L1271.9 314.6 L1273.8 315.8 L1275.4 315.7 L1277.0 315.2 L1278.6 314.6 L1280.6 315.1 L1282.5 315.4 L1284.4 315.9 L1286.3 315.1 L1288.3 315.5 L1290.2 315.1 L1292.1 315.0 L1294.0 315.5 L1295.0 316.4" fill="none" stroke="#4285f4" stroke-width="2" stroke-linejoin="round"/><circle cx="1300" cy="210" r="1.8" fill="#757575"/><circle cx="1300" cy="215.7" r="1.8" fill="#757575"/><circle cx="1300" cy="221.5" r="1.8" fill="#757575"/></svg>
<div class="t" style="top:246.74px;font-size:12px;line-height:20px;color:#222222;font-weight:normal;font-family:'Liberation Sans', sans-serif;right:564.8px;">1,25</div>
<div class="t" style="top:294.34px;font-size:12px;line-height:20px;color:#222222;font-weight:normal;font-family:'Liberation Sans', sans-serif;right:564.8px;">1,00</div>
<div class="t" style="top:341.64px;font-size:12px;line-height:20px;color:#222222;font-weight:normal;font-family:'Liberation Sans', sans-serif;right:564.8px;">0,75</div>
<div class="t" style="top:388.44px;font-size:12px;line-height:20px;color:#222222;font-weight:normal;font-family:'Liberation Sans', sans-serif;right:564.8px;">0,50</div>
<div class="t" style="top:435.44px;font-size:12px;line-height:20px;color:#222222;font-weight:normal;font-family:'Liberation Sans', sans-serif;right:564.8px;">0,25</div>
<div class="t" style="top:482.04px;font-size:12px;line-height:20px;color:#222222;font-weight:normal;font-family:'Liberation Sans', sans-serif;right:564.8px;">0,00</div>
<div class="t" style="top:493.94px;font-size:12px;line-height:20px;color:#222222;font-weight:normal;font-family:'Liberation Sans', sans-serif;left:672.7px;width:400px;text-align:center;">01/03/2022</div>
<div class="t" style="top:506.04px;font-size:12px;line-height:20px;color:#222222;font-weight:normal;font-family:'Liberation Sans', sans-serif;left:672.7px;width:400px;text-align:center;">00:00:00</div>
<div class="t" style="top:493.94px;font-size:12px;line-height:20px;color:#222222;font-weight:normal;font-family:'Liberation Sans', sans-serif;left:756.4px;width:400px;text-align:center;">01/05/2022</div>
<div class="t" style="top:506.04px;font-size:12px;line-height:20px;color:#222222;font-weight:normal;font-family:'Liberation Sans', sans-serif;left:756.4px;width:400px;text-align:center;">00:00:00</div>
<div class="t" style="top:493.94px;font-size:12px;line-height:20px;color:#222222;font-weight:normal;font-family:'Liberation Sans', sans-serif;left:841.0999999999999px;width:400px;text-align:center;">01/07/2022</div>
<div class="t" style="top:506.04px;font-size:12px;line-height:20px;color:#222222;font-weight:normal;font-family:'Liberation Sans', sans-serif;left:841.0999999999999px;width:400px;text-align:center;">00:00:00</div>
<div class="t" style="top:493.94px;font-size:12px;line-height:20px;color:#222222;font-weight:normal;font-family:'Liberation Sans', sans-serif;left:927.7px;width:400px;text-align:center;">01/09/2022</div>
<div class="t" style="top:506.04px;font-size:12px;line-height:20px;color:#222222;font-weight:normal;font-family:'Liberation Sans', sans-serif;left:927.7px;width:400px;text-align:center;">00:00:00</div>
<div class="t" style="top:493.94px;font-size:12px;line-height:20px;color:#222222;font-weight:normal;font-family:'Liberation Sans', sans-serif;left:1012.4000000000001px;width:400px;text-align:center;">01/11/2022</div>
<div class="t" style="top:506.04px;font-size:12px;line-height:20px;color:#222222;font-weight:normal;font-family:'Liberation Sans', sans-serif;left:1012.4000000000001px;width:400px;text-align:center;">00:00:00</div>
<div class="t" style="top:535.84px;font-size:12px;line-height:20px;color:#222222;font-weight:normal;font-family:'Liberation Sans', sans-serif;left:843.5px;width:400px;text-align:center;">Date</div>
<div class="t" style="left:718px;top:377.3px;width:40px;height:20px;line-height:20px;text-align:center;font-size:12px;color:#222;transform:rotate(-90deg);font-family:'Liberation Sans',sans-serif;">Close</div>
<div class="r" style="left:713px;top:199px;width:602px;height:373px;background:transparent;box-sizing:border-box;border:1px solid rgba(90,110,140,0.55);"></div>
<div class="r" style="left:714px;top:200px;width:600px;height:371px;background:transparent;box-sizing:border-box;border:1px solid #1a73e8;"></div>
<div class="r" style="left:710.5px;top:196.5px;width:7px;height:7px;background:#1a73e8;box-shadow:0 0 0 1px #fff;"></div>
<div class="r" style="left:710.5px;top:382.0px;width:7px;height:7px;background:#1a73e8;box-shadow:0 0 0 1px #fff;"></div>
<div class="r" style="left:710.5px;top:567.5px;width:7px;height:7px;background:#1a73e8;box-shadow:0 0 0 1px #fff;"></div>
<div class="r" style="left:1010.5px;top:196.5px;width:7px;height:7px;background:#1a73e8;box-shadow:0 0 0 1px #fff;"></div>
<div class="r" style="left:1010.5px;top:567.5px;width:7px;height:7px;background:#1a73e8;box-shadow:0 0 0 1px #fff;"></div>
<div class="r" style="left:1310.5px;top:196.5px;width:7px;height:7px;background:#1a73e8;box-shadow:0 0 0 1px #fff;"></div>
<div class="r" style="left:1310.5px;top:382.0px;width:7px;height:7px;background:#1a73e8;box-shadow:0 0 0 1px #fff;"></div>
<div class="r" style="left:1310.5px;top:567.5px;width:7px;height:7px;background:#1a73e8;box-shadow:0 0 0 1px #fff;"></div>
<div class="r" style="left:267px;top:62px;width:322px;height:561px;background:#fff;border-radius:0 0 4px 4px;box-shadow:0 4px 6px rgba(0,0,0,0.18),0 1px 3px rgba(0,0,0,0.12);"></div>
<div class="r" style="left:267px;top:205px;width:322px;height:1px;background:#dadce0;"></div>
<div class="r" style="left:267px;top:350px;width:322px;height:1px;background:#dadce0;"></div>
<div class="r" style="left:267px;top:431px;width:322px;height:1px;background:#dadce0;"></div>
<div class="r" style="left:267px;top:544px;width:322px;height:1px;background:#dadce0;"></div>
<div class="t" style="top:75.05px;font-size:14px;line-height:20px;color:#1f1f1f;font-weight:normal;font-family:'Liberation Sans', sans-serif;letter-spacing:0px;left:306px;-webkit-text-stroke:0.2px #1f1f1f;">Cellules</div>
<svg style="left:566px;top:81px;" width="7" height="7" viewBox="0 0 7 7"><path d="M0 0L7 3.5L0 7Z" fill="#5f6368"/></svg>
<svg style="left:282px;top:78px;" width="15" height="15" viewBox="0 0 15 15"><rect x="0.7" y="0.7" width="12.6" height="12.6" rx="1.2" stroke="#444746" stroke-width="1.4" fill="none"/></svg>
<div class="t" style="top:107.05px;font-size:14px;line-height:20px;color:#1f1f1f;font-weight:normal;font-family:'Liberation Sans', sans-serif;letter-spacing:0.06px;left:306px;-webkit-text-stroke:0.2px #1f1f1f;">Lignes</div>
<svg style="left:566px;top:113px;" width="7" height="7" viewBox="0 0 7 7"><path d="M0 0L7 3.5L0 7Z" fill="#5f6368"/></svg>
<svg style="left:282px;top:110px;" width="15" height="15" viewBox="0 0 15 15"><rect x="0.7" y="0.7" width="12.6" height="12.6" rx="1.2" stroke="#444746" stroke-width="1.4" fill="none"/><path d="M0.7 5H13.3M0.7 9H13.3" stroke="#444746" stroke-width="1.4" fill="none"/></svg>
<div class="t" style="top:139.05px;font-size:14px;line-height:20px;color:#1f1f1f;font-weight:normal;font-family:'Liberation Sans', sans-serif;letter-spacing:0.03px;left:306px;-webkit-text-stroke:0.2px #1f1f1f;">Colonnes</div>
<svg style="left:566px;top:145px;" width="7" height="7" viewBox="0 0 7 7"><path d="M0 0L7 3.5L0 7Z" fill="#5f6368"/></svg>
<svg style="left:282px;top:142px;" width="15" height="15" viewBox="0 0 15 15"><rect x="0.7" y="0.7" width="12.6" height="12.6" rx="1.2" stroke="#444746" stroke-width="1.4" fill="none"/><path d="M5 0.7V13.3M9 0.7V13.3" stroke="#444746" stroke-width="1.4" fill="none"/></svg>
<div class="t" style="top:171.05px;font-size:14px;line-height:20px;color:#1f1f1f;font-weight:normal;font-family:'Liberation Sans', sans-serif;letter-spacing:0px;left:306px;-webkit-text-stroke:0.2px #1f1f1f;">Feuille</div>
<div class="t" style="top:171.92px;font-size:13.8px;line-height:20px;color:#6b6f74;font-weight:bold;font-family:'Liberation Sans', sans-serif;right:778px;">Maj+F11</div>
<svg style="left:281.2px;top:174px;" width="16" height="15" viewBox="0 0 16 15"><rect x="0.7" y="1.8" width="14" height="10.4" rx="1" stroke="#444746" stroke-width="1.4" fill="none"/><rect x="9" y="1.1" width="6.4" height="4.6" fill="#444746"/></svg>
<div class="t" style="top:220.05px;font-size:14px;line-height:20px;color:#1f1f1f;font-weight:normal;font-family:'Liberation Sans', sans-serif;letter-spacing:-0.07px;left:306px;-webkit-text-stroke:0.2px #1f1f1f;">Graphique</div>
<svg style="left:282px;top:223px;" width="15" height="15" viewBox="0 0 15 15"><rect x="0.7" y="0.7" width="12.6" height="12.6" rx="1.2" stroke="#444746" stroke-width="1.4" fill="none"/><path d="M3.8 6V10.8M6.8 4V10.8M9.8 8V10.8" stroke="#444746" stroke-width="1.4" fill="none"/></svg>
<div class="t" style="top:252.05px;font-size:14px;line-height:20px;color:#1f1f1f;font-weight:normal;font-family:'Liberation Sans', sans-serif;letter-spacing:0.17px;left:306px;-webkit-text-stroke:0.2px #1f1f1f;">Tableau croisé dynamique</div>
<svg style="left:282px;top:255px;" width="15" height="15" viewBox="0 0 15 15"><rect x="0.4" y="0" width="3.6" height="3.3" rx="0.6" fill="#444746"/><rect x="5.4" y="0" width="8.4" height="3.3" rx="0.6" fill="#444746"/><rect x="0.4" y="4.6" width="3.4" height="9.2" rx="0.6" fill="#444746"/><path d="M7.2 12.6L12.6 7.2" stroke="#444746" stroke-width="1.4" fill="none"/><path d="M6 10.4V13.8H9.4Z M10.4 6H13.8V9.4Z" fill="#444746"/></svg>
<div class="t" style="top:284.05px;font-size:14px;line-height:20px;color:#1f1f1f;font-weight:normal;font-family:'Liberation Sans', sans-serif;letter-spacing:0.12px;left:306px;-webkit-text-stroke:0.2px #1f1f1f;">Image</div>
<svg style="left:566px;top:290px;" width="7" height="7" viewBox="0 0 7 7"><path d="M0 0L7 3.5L0 7Z" fill="#5f6368"/></svg>
<svg style="left:282px;top:287px;" width="15" height="15" viewBox="0 0 15 15"><rect x="0.7" y="0.7" width="12.6" height="12.6" rx="1.2" stroke="#444746" stroke-width="1.4" fill="none"/><path d="M3 10.5L5.5 7.5L7.5 9.5L9 8L11 10.5Z" fill="#444746"/></svg>
<div class="t" style="top:316.05px;font-size:14px;line-height:20px;color:#1f1f1f;font-weight:normal;font-family:'Liberation Sans', sans-serif;letter-spacing:0px;left:306px;-webkit-text-stroke:0.2px #1f1f1f;">Dessin</div>
<svg style="left:282px;top:319px;" width="15" height="15" viewBox="0 0 15 15"><rect x="0.7" y="0.7" width="12.6" height="12.6" rx="1.2" stroke="#444746" stroke-width="1.4" fill="none"/><circle cx="5.2" cy="5.4" r="2.8" fill="#444746"/><rect x="7.2" y="7" width="4.3" height="4.4" fill="#444746"/></svg>
<div class="t" style="top:365.05px;font-size:14px;line-height:20px;color:#1f1f1f;font-weight:normal;font-family:'Liberation Sans', sans-serif;letter-spacing:0.29px;left:306px;-webkit-text-stroke:0.2px #1f1f1f;">Fonction</div>
<svg style="left:566px;top:371px;" width="7" height="7" viewBox="0 0 7 7"><path d="M0 0L7 3.5L0 7Z" fill="#5f6368"/></svg>
<svg style="left:282px;top:368px;" width="15" height="15" viewBox="0 0 15 15"><path d="M2 1H12V3.3H5.3L9.2 7L5.3 10.7H12V13H2V11.2L6.3 7L2 2.8Z" fill="#444746"/></svg>
<div class="t" style="top:397.05px;font-size:14px;line-height:20px;color:#b4b6b8;font-weight:normal;font-family:'Liberation Sans', sans-serif;letter-spacing:0.14px;left:306px;-webkit-text-stroke:0.2px #b4b6b8;">Lien</div>
<div class="t" style="top:397.92px;font-size:13.8px;line-height:20px;color:#c4c6c8;font-weight:bold;font-family:'Liberation Sans', sans-serif;right:778px;">K</div>
<svg style="left:551.53125px;top:402.8px;" width="10.5" height="10.5" viewBox="0 0 10.5 10.5"><path d="M3.5 3.5H7V7H3.5Z M3.5 3.5V2A1.5 1.5 0 1 0 2 3.5H3.5 M7 3.5H8.5A1.5 1.5 0 1 0 7 2V3.5 M7 7V8.5A1.5 1.5 0 1 0 8.5 7H7 M3.5 7H2A1.5 1.5 0 1 0 3.5 8.5V7" fill="none" stroke="#c4c6c8" stroke-width="1.3"/></svg>
<svg style="left:282px;top:400px;" width="15" height="15" viewBox="0 0 15 15"><path d="M5.5 3.5H3.8A3.5 3.5 0 0 0 3.8 10.5H5.5M8.5 3.5H10.2A3.5 3.5 0 0 1 10.2 10.5H8.5M4.5 7H9.5" stroke="#b4b6b8" stroke-width="1.4" fill="none"/></svg>
<div class="t" style="top:446.05px;font-size:14px;line-height:20px;color:#1f1f1f;font-weight:normal;font-family:'Liberation Sans', sans-serif;letter-spacing:0.06px;left:306px;-webkit-text-stroke:0.2px #1f1f1f;">Case à cocher</div>
<svg style="left:282px;top:449px;" width="15" height="15" viewBox="0 0 15 15"><rect x="0.7" y="0.7" width="12.6" height="12.6" rx="1.2" stroke="#444746" stroke-width="1.4" fill="none"/><path d="M3.6 7L6 9.4L10.4 5" stroke="#444746" stroke-width="1.4" fill="none"/></svg>
<div class="t" style="top:478.05px;font-size:14px;line-height:20px;color:#1f1f1f;font-weight:normal;font-family:'Liberation Sans', sans-serif;letter-spacing:0.24px;left:306px;-webkit-text-stroke:0.2px #1f1f1f;">Liste déroulante</div>
<svg style="left:282px;top:481px;" width="15" height="15" viewBox="0 0 15 15"><circle cx="7.5" cy="7.5" r="6.8" stroke="#444746" stroke-width="1.4" fill="none"/><path d="M4.8 6.3H10.2L7.5 9.2Z" fill="#444746"/></svg>
<div class="t" style="top:510.05px;font-size:14px;line-height:20px;color:#1f1f1f;font-weight:normal;font-family:'Liberation Sans', sans-serif;letter-spacing:0.25px;left:306px;-webkit-text-stroke:0.2px #1f1f1f;">Chips intelligents</div>
<svg style="left:566px;top:516px;" width="7" height="7" viewBox="0 0 7 7"><path d="M0 0L7 3.5L0 7Z" fill="#5f6368"/></svg>
<svg style="left:282px;top:513px;" width="16" height="15" viewBox="0 0 16 15"><rect x="0.7" y="1.5" width="10" height="6.5" rx="3.2" stroke="#444746" stroke-width="1.4" fill="none"/><rect x="4.5" y="6" width="11" height="6.8" rx="3.4" fill="#fff" stroke="#444746" stroke-width="1.4"/></svg>
<div class="t" style="top:559.05px;font-size:14px;line-height:20px;color:#1f1f1f;font-weight:normal;font-family:'Liberation Sans', sans-serif;letter-spacing:0.26px;left:306px;-webkit-text-stroke:0.2px #1f1f1f;">Commentaire</div>
<div class="t" style="top:559.92px;font-size:13.8px;line-height:20px;color:#6b6f74;font-weight:bold;font-family:'Liberation Sans', sans-serif;right:778px;">+Option+M</div>
<svg style="left:489.453125px;top:564.8px;" width="10.5" height="10.5" viewBox="0 0 10.5 10.5"><path d="M3.5 3.5H7V7H3.5Z M3.5 3.5V2A1.5 1.5 0 1 0 2 3.5H3.5 M7 3.5H8.5A1.5 1.5 0 1 0 7 2V3.5 M7 7V8.5A1.5 1.5 0 1 0 8.5 7H7 M3.5 7H2A1.5 1.5 0 1 0 3.5 8.5V7" fill="none" stroke="#6b6f74" stroke-width="1.3"/></svg>
<svg style="left:282px;top:562px;" width="15" height="15" viewBox="0 0 15 15"><path d="M0.8 0.8H13.8V11.3H4L0.8 14.5Z" stroke="#444746" stroke-width="1.4" fill="none" stroke-linejoin="round"/><path d="M7.3 3V9M4.3 6H10.3" stroke="#444746" stroke-width="1.4" fill="none"/></svg>
<div class="t" style="top:591.05px;font-size:14px;line-height:20px;color:#1f1f1f;font-weight:normal;font-family:'Liberation Sans', sans-serif;letter-spacing:0px;left:306px;-webkit-text-stroke:0.2px #1f1f1f;">Remarque</div>
<div class="t" style="top:591.92px;font-size:13.8px;line-height:20px;color:#6b6f74;font-weight:bold;font-family:'Liberation Sans', sans-serif;right:778px;">Maj+F2</div>
<svg style="left:282px;top:594px;" width="15" height="15" viewBox="0 0 15 15"><path d="M0.8 0.8H13.2V8.8L9 13.2H0.8Z" stroke="#444746" stroke-width="1.4" fill="none" stroke-linejoin="round"/><path d="M3.5 4.3H10.5M3.5 7.3H8" stroke="#444746" stroke-width="1.4" fill="none"/></svg>
</body></html>
